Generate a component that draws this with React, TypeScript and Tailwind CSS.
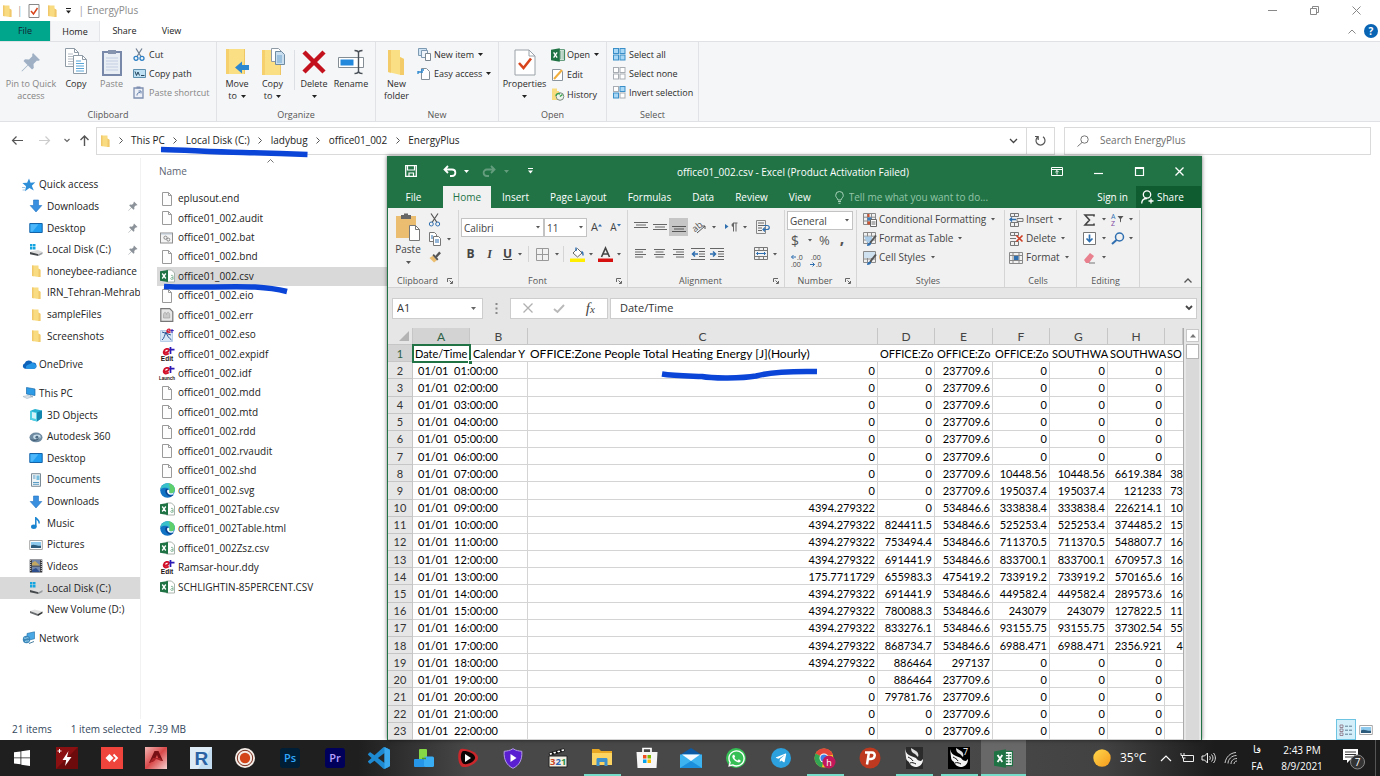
import React from "react";
import { FaWhatsapp, FaTelegramPlane } from "react-icons/fa";

type Kids = { children?: React.ReactNode };

function Ic({ w = 14, h = 14, vb, children, className = "" }: Kids & { w?: number; h?: number; vb?: string; className?: string }) {
  return (
    <svg width={w} height={h} viewBox={vb ?? `0 0 ${w} ${h}`} fill="none" className={`shrink-0 overflow-visible ${className}`} aria-hidden="true">
      {children}
    </svg>
  );
}

/* ---------- shared small glyphs ---------- */
const Caret = ({ className = "" }: { className?: string }) => (
  <Ic w={5} h={3} className={className}><path d="M0 0h5L2.500 3z" fill="currentColor" /></Ic>
);
const Folder = ({ w = 10, h = 12 }: { w?: number; h?: number }) => (
  <Ic w={w} h={h} vb="0 0 10 12">
    <path d="M1 .5h6.500v3L9.300 5v7H7.500L1 11z" fill="#f9dc82" />
    <path d="M1 .5h1.500v10.800L1 11zM7.500 3.500l2 1.200V12H7.500z" fill="#f0c76a" />
  </Ic>
);
const PushPin = ({ s = 10, color = "#8c9299" }: { s?: number; color?: string }) => (
  <Ic w={s} h={s} vb="0 0 20 20">
    <path d="M12 1l7 7-2 1-1-.5-3.500 3.500.3 4-1.800 1.500L7 13.500 1 19.500l-.5-.5 6-6L2.500 9 4 7.200l4 .3L11.500 4 11 3z" fill={color} />
  </Ic>
);
const Doc = () => (
  <Ic w={14} h={14}><path d="M2.500.5h6l3 3v10h-9z" fill="#fdfdfd" stroke="#9a9a9a" /><path d="M8.500.5v3h3" stroke="#9a9a9a" /></Ic>
);
const ExcelDoc = () => (
  <Ic w={15} h={14}>
    <path d="M6.500 1h5l3 3v9h-8z" fill="#fff" stroke="#a9b3ad" />
    <path d="M11 6.500c2-.8 2 .5 2 1.500v2.500m0-2c-2.600-.4-3 2-1.300 2 .8 0 1.300-.5 1.300-1" stroke="#7fb394" strokeWidth=".9" />
    <path d="M0 2.200L8 1v12l-8-1.200z" fill="#1f7244" />
    <path d="M2.200 4.500l3.600 5M5.800 4.500l-3.600 5" stroke="#fff" strokeWidth="1.300" />
  </Ic>
);
const ExcelBig = ({ s = 15 }: { s?: number }) => (
  <Ic w={s} h={s} vb="0 0 16 16">
    <path d="M9 2h6.500v12H9z" fill="#fff" stroke="#1f7244" />
    <path d="M10 4.500h2m1 0h1.500m-4.500 2.300h2m1 0h1.500m-4.500 2.300h2m1 0h1.500m-4.500 2.300h2m1 0h1.500" stroke="#1f7244" strokeWidth="1.200" />
    <path d="M0 2L10 .3v15.400L0 14z" fill="#1f7244" />
    <path d="M3 5l4 6M7 5l-4 6" stroke="#fff" strokeWidth="1.500" />
  </Ic>
);
const EPlus = ({ label }: { label: string }) => (
  <Ic w={15} h={15}>
    <path d="M10.500 0v7M8.500 2.600h6" stroke="#2b1ab5" strokeWidth="1.700" />
    <path d="M4 5.500c3 .2 5-1 4.700-2.500C8.400 1 4.500 1.600 3.800 4.800c-.5 2.600 2 3.500 5 1.700" stroke="#d3122b" strokeWidth="1.900" />
    <text x="7" y="14" fontSize={label === "Edit" ? 6.500 : 4.500} fontWeight="700" fill="#1b1010" textAnchor="middle" fontFamily="Liberation Sans">{label}</text>
  </Ic>
);
const Eso = () => (
  <Ic w={14} h={14}>
    <path d="M.5 2.500h9l3 2v9H.5z" fill="#d7e6f7" stroke="#a8c4e2" strokeWidth=".8" />
    <path d="M2 12c2-1 3-6 4-8 1 4 3 6 5.500 8M2 4l9 3" stroke="#2c5796" />
    <path d="M7 3.600c3-.2 3.500-1.200 3-2C9.200.3 6.800 1.600 6.900 3.500c.1 1.500 2 1.600 3.600.6" stroke="#d3122b" strokeWidth="1.200" />
    <path d="M12 1v4M10.600 2.600h3.200" stroke="#2b1ab5" />
  </Ic>
);
const Bat = () => (
  <Ic w={14} h={14}><rect x=".5" y="2" width="12" height="10" fill="#f4f4f4" stroke="#8e8e8e" /><path d="M1 3h11" stroke="#b9c7d6" /><circle cx="5.500" cy="6.700" r="1.600" stroke="#888" /><circle cx="8.300" cy="8.600" r="1.500" stroke="#888" /></Ic>
);
const Err = () => (
  <Ic w={14} h={14}><path d="M.8.7h9l3 3v9.600H.8z" fill="#e7e7e7" stroke="#777" strokeWidth="1.200" /><path d="M3.500 10V6.500c.6-3 2.600-3 3 0 .5-3 2.700-3 3.200 0V10z" fill="#c9c9c9" stroke="#a5a5a5" strokeWidth=".7" /></Ic>
);
const Edge = () => (
  <Ic w={15} h={15} vb="0 0 16 16">
    <circle cx="8" cy="8" r="7.800" fill="#1173c4" />
    <path d="M.4 7C1 2.700 4.300.2 8 .2c4.700 0 7.800 3.500 7.800 6.800 0 3-2.200 4-4 4-1.600 0-2.400-.7-2.200-1.300.8-1.300.6-4.200-2.800-4.600C4 4.800 1.500 5.500.4 7z" fill="#39c1c9" />
    <path d="M9 .3c4 .4 6.800 3.500 6.800 6.700 0 3-2.200 4-4 4-1.600 0-2.400-.7-2.200-1.300.6-1 2-5-.6-9.400z" fill="#5fcf6b" />
    <path d="M5.800 7.500c-.8 3.500 2 6.500 5.400 6.800 1.400 0 2.600-.6 3.400-1.500-1.800 1-6 .8-7.200-3-.4-1.500.4-2.500 1.200-2.800-1-.9-2.500-.6-2.800.5z" fill="#0b3f8d" />
    <path d="M7.500 8.500c.2-.9 1-1.500 1.700-1.400.8.500.9 1.700.4 2.600-.3.700 1 1.700 3.500 1.200l1.500-.7-.6 1.800c-3 1.400-6.500-.4-6.500-3.500z" fill="#fff" />
  </Ic>
);

/* ---------- navigation pane icons ---------- */
const Star = () => (
  <Ic w={14} h={14}><path d="M7 .5l1.600 4.300 4.700-.6-3.500 3.500 2 4.800L7.400 10 3 13.200l1-5L.4 5l4.700-.2z" fill="#2e8fd8" /><path d="M0 9.500h3M.5 12h2.500" stroke="#9fc5e5" /></Ic>
);
const Down = () => <Ic w={14} h={14}><path d="M4.500 1h5v5.500h3.300L7 13 1.200 6.500h3.300z" fill="#3a8fde" stroke="#2274c4" strokeWidth=".6" /></Ic>;
const Desk = () => <Ic w={14} h={14}><path d="M.8 2.500h12.400v9H.8z" fill="#1e9df1" stroke="#1463a8" /><path d="M1.500 3.200h8l-6 7.500h-2z" fill="#4db7fa" /></Ic>;
const DiskC = () => (
  <Ic w={14} h={14}><path d="M1 1h2.500v2.500H1zM4 1h2.500v2.500H4zM1 4h2.500v2.500H1zM4 4h2.500v2.500H4z" fill="#14a5e0" /><path d="M1.500 8.500L9 7l4.500 2-4 2.500-8-1z" fill="#dcdcdc" /><path d="M1 9l8.500 2.200V13L1 11.300z" fill="#44484a" /><path d="M9.500 11.200L13.500 9v2L9.500 13z" fill="#9a9d9f" /></Ic>
);
const DiskD = () => <Ic w={14} h={14}><path d="M1 8L5.500 6.500 13.500 8.500l-4.500 2.500z" fill="#e3e3e3" /><path d="M1 8l8 3v2l-8-3z" fill="#6a6d6f" /><path d="M9 11l4.500-2.500v1.800L9 13z" fill="#333637" /></Ic>;
const OneD = () => <Ic w={15} h={11} vb="0 0 16 12"><path d="M3 10.500a3 3 0 01-.4-5.700A5 5 0 0111.500 4a3.300 3.300 0 011.500 6.500z" fill="#0f62ba" /><path d="M5 10.500c-2-1.500 0-4 1.500-4.200L10 4.500c2-.8 5.500 1 5.500 3.500 0 1.500-1.200 2.500-2.500 2.500z" fill="#2795e5" /></Ic>;
const PC = () => <Ic w={15} h={14}><path d="M4.500 1.500l8.500 1.500v6.500L4.500 8z" fill="#2e9be6" stroke="#1a6cab" strokeWidth=".7" /><path d="M1 10.500l5-1 4.500 1.200-5.500 1.800z" fill="#dde5eb" stroke="#a4b4c0" strokeWidth=".6" /><path d="M8 9.500l3 1.500" stroke="#8fa6b8" /></Ic>;
const Cube = () => <Ic w={14} h={14}><path d="M1 3l5-2 7 1.500V10l-5 3.500-7-2z" fill="#27b1d2" /><path d="M1 3l7 1.500v9L1 11.500z" fill="#53cfe3" /><path d="M8 4.500l5-2V10l-5 3.500z" fill="#1586ad" /><path d="M3 4l4 1v6L3 10z" fill="#d4f3f8" /></Ic>;
const Auto = () => <Ic w={14} h={14} vb="0 0 15 14"><ellipse cx="7.500" cy="7.500" rx="7" ry="5.200" fill="#6f8ba2" /><ellipse cx="8.500" cy="7" rx="4" ry="2.600" fill="#c6dbe9" /><path d="M1 9c3 2 8 1 11-2-1 4-8 6-11 2z" fill="#3f5c74" /><circle cx="8.500" cy="7.300" r="1.600" fill="#4b6a83" /></Ic>;
const Docs = () => <Ic w={14} h={14}><path d="M2.500.7h9v12.600h-9z" fill="#eef3f6" stroke="#7c8b95" /><path d="M4 3h2.500M4 5h2.500M4 9.500h6M4 11.300h6" stroke="#5b9cc4" /><path d="M7.500 2.500h3V7h-3z" fill="#77bede" /></Ic>;
const Music = () => <Ic w={14} h={14}><ellipse cx="4.800" cy="10.800" rx="2.800" ry="2.200" fill="#1a83d0" /><path d="M6.800 11V1c.4 2.500 4 2.800 3.400 6.500" stroke="#1a83d0" strokeWidth="1.500" /></Ic>;
const Pics = () => <Ic w={14} h={14}><path d="M.7 2.500h12.600v9H.7z" fill="#fff" stroke="#a6a6a6" /><path d="M2 4h10v6H2z" fill="#8cc9ec" /><path d="M2 7.500c3-2 5 .5 10 .3V10H2z" fill="#2d5b7c" /></Ic>;
const Vids = () => <Ic w={14} h={14}><path d="M.7.500h12.600v13H.7z" fill="#35373c" /><path d="M3 1h8v5.500H3zM3 7.500h8V13H3z" fill="#7286ab" /><path d="M3 4l3-2 5 4.500H3z" fill="#c4a862" /><path d="M3 11l4-2 4 4H3z" fill="#2d4e8c" /><path d="M1.700 1v12M12.300 1v12" stroke="#dcdcdc" strokeDasharray="1 1" /></Ic>;
const Net = () => <Ic w={15} h={14}><path d="M5 2.500L12.500.8v7L5 9.500z" fill="#4aa8e4" stroke="#1c6ca4" strokeWidth=".6" /><circle cx="4.500" cy="8.500" r="3.700" fill="#3b86b8" /><path d="M2 7c2 1 3-1 4.500 0M3 10.500c1.500-1 3 0 4-1" stroke="#a5dbf5" /><path d="M7 12.500l5-2" stroke="#4b7fa1" /></Ic>;

type NavItem = { t: string; icon: React.ReactNode; top?: boolean; pin?: boolean; sel?: boolean };
const nav: (NavItem | null)[] = [
  { t: "Quick access", icon: <Star />, top: true },
  { t: "Downloads", icon: <Down />, pin: true },
  { t: "Desktop", icon: <Desk />, pin: true },
  { t: "Local Disk (C:)", icon: <DiskC />, pin: true },
  { t: "honeybee-radiance", icon: <Folder /> },
  { t: "IRN_Tehran-Mehrab", icon: <Folder /> },
  { t: "sampleFiles", icon: <Folder /> },
  { t: "Screenshots", icon: <Folder /> },
  null,
  { t: "OneDrive", icon: <OneD />, top: true },
  null,
  { t: "This PC", icon: <PC />, top: true },
  { t: "3D Objects", icon: <Cube /> },
  { t: "Autodesk 360", icon: <Auto /> },
  { t: "Desktop", icon: <Desk /> },
  { t: "Documents", icon: <Docs /> },
  { t: "Downloads", icon: <Down /> },
  { t: "Music", icon: <Music /> },
  { t: "Pictures", icon: <Pics /> },
  { t: "Videos", icon: <Vids /> },
  { t: "Local Disk (C:)", icon: <DiskC />, sel: true },
  { t: "New Volume (D:)", icon: <DiskD /> },
  null,
  { t: "Network", icon: <Net />, top: true },
];

const files: [string, React.ReactNode][] = [
  ["eplusout.end", <Doc />],
  ["office01_002.audit", <Doc />],
  ["office01_002.bat", <Bat />],
  ["office01_002.bnd", <Doc />],
  ["office01_002.csv", <ExcelDoc />],
  ["office01_002.eio", <Doc />],
  ["office01_002.err", <Err />],
  ["office01_002.eso", <Eso />],
  ["office01_002.expidf", <EPlus label="Edit" />],
  ["office01_002.idf", <EPlus label="Launch" />],
  ["office01_002.mdd", <Doc />],
  ["office01_002.mtd", <Doc />],
  ["office01_002.rdd", <Doc />],
  ["office01_002.rvaudit", <Doc />],
  ["office01_002.shd", <Doc />],
  ["office01_002.svg", <Edge />],
  ["office01_002Table.csv", <ExcelDoc />],
  ["office01_002Table.html", <Edge />],
  ["office01_002Zsz.csv", <ExcelDoc />],
  ["Ramsar-hour.ddy", <EPlus label="Edit" />],
  ["SCHLIGHTIN-85PERCENT.CSV", <ExcelDoc />],
];

/* ---------- explorer ribbon ---------- */
function Group({ label, w, children }: Kids & { label: string; w: string }) {
  return (
    <section className={`flex h-full shrink-0 flex-col border-r border-[#e0e2e5] ${w}`}>
      <div className="flex flex-1">{children}</div>
      <div className="text-center leading-[12px] text-[#555]">{label}</div>
    </section>
  );
}
function Big({ icon, l1, l2, caret, w, dim }: { icon: React.ReactNode; l1: string; l2?: string; caret?: boolean; w: string; dim?: boolean }) {
  return (
    <button className={`flex shrink-0 flex-col items-center pt-[4px] leading-[12px] whitespace-nowrap ${w} ${dim ? "text-[#858585]" : "text-[#2b2b2b]"}`}>
      <span className="flex h-[32px] items-center">{icon}</span>
      <span>{l1}</span>
      {(l2 || caret) && (
        <span className="flex h-[12px] items-center gap-[4px]">
          {l2}
          {caret && <Caret className="text-[#222]" />}
        </span>
      )}
    </button>
  );
}
function Small({ icon, t, caret, dim }: { icon: React.ReactNode; t: string; caret?: boolean; dim?: boolean }) {
  return (
    <button className={`flex h-[19px] items-center whitespace-nowrap ${dim ? "text-[#858585]" : "text-[#2b2b2b]"}`}>
      <span className="flex w-[16px] items-center">{icon}</span>
      {t}
      {caret && <Caret className="ml-[4px] text-[#222]" />}
    </button>
  );
}
const Page = ({ x, y, c }: { x: number; y: number; c: string }) => (
  <g transform={`translate(${x} ${y})`}>
    <path d="M.5.5h9l4 4v14H.5z" fill="#fff" stroke="#8e9aa5" />
    <path d="M9.500.500v4h4" stroke="#8e9aa5" />
    <path d="M3 6h5M3 8.500h8M3 11h8M3 13.500h8M3 16h8" stroke={c} />
  </g>
);
const BigFolder = () => (
  <><path d="M1 1h19v25H1z" fill="#fbdf84" /><path d="M1 1h3v25H1z" fill="#f6d06c" /><path d="M19.500 1v25" stroke="#eec663" /></>
);
const tile = (x: number, y: number, on: boolean) => (
  <rect key={`${x}-${y}`} x={x} y={y} width="5" height="5" fill={on ? "#a8d8f5" : "#fff"} stroke={on ? "#3a8fc9" : "#a8adb3"} />
);
const Tiles = ({ on }: { on: number[] }) => (
  <Ic w={13} h={13}>{[[0.5, 0.5], [7, 0.5], [0.5, 7], [7, 7]].map(([x, y], i) => tile(x, y, on.includes(i)))}</Ic>
);

function ExplorerRibbon() {
  return (
    <div className="flex h-[81px] shrink-0 border-y border-[#dfe1e4] bg-[#f5f6f7] text-[9px]">
      <Group label="Clipboard" w="w-[217px]">
        <Big w="w-[62px]" dim l1="Pin to Quick" l2="access" icon={<PushPin s={20} color="#9fb0c5" />} />
        <Big w="w-[28px]" l1="Copy" icon={<Ic w={24} h={28}><Page x={1} y={0} c="#b5bcc4" /><Page x={9} y={7} c="#5aa5d8" /></Ic>} />
        <Big
          w="w-[43px]" dim l1="Paste"
          icon={<Ic w={20} h={27}><path d="M1 3h18v23H1z" fill="#e9edf4" stroke="#7888a8" strokeWidth="2" /><path d="M6 1h8v4H6z" fill="#8694ad" /><path d="M4 9h12M4 12h12M4 15h12M4 18h12M4 21h12" stroke="#c3cfe2" /></Ic>}
        />
        <div className="flex flex-col pt-[3px]">
          <Small t="Cut" icon={<Ic w={12} h={13}><path d="M3 .5l5 8M9 .5l-5 8" stroke="#6e7f92" strokeWidth="1.200" /><circle cx="3" cy="10.300" r="2" stroke="#2b7fc4" strokeWidth="1.300" /><circle cx="9" cy="10.300" r="2" stroke="#2b7fc4" strokeWidth="1.300" /></Ic>} />
          <Small t="Copy path" icon={<Ic w={14} h={9}><path d="M.5.5h12v8H.5z" fill="#bfe1f4" stroke="#5d8fae" /><path d="M2 2.500l1.500 4L5 3l1.500 3.500M8 6.500h3.500" stroke="#26475e" /></Ic>} />
          <Small dim t="Paste shortcut" icon={<Ic w={12} h={13}><path d="M1 2h9v10H1z" fill="#edf1f7" stroke="#7d8fb0" strokeWidth="1.300" /><path d="M3.500.5h4v2h-4z" fill="#7d8fb0" /><path d="M4 9.500c0-2 1-3 3-3M5.500 5H8v2.500" stroke="#5f7ba8" /></Ic>} />
        </div>
      </Group>
      <Group label="Organize" w="w-[159px]">
        <Big w="w-[40px]" l1="Move" l2="to" caret icon={<Ic w={24} h={28}><BigFolder /><path d="M10 19.500l7-6v3.500h7v5h-7v3.500z" fill="#2b87cf" /></Ic>} />
        <Big w="w-[31px]" l1="Copy" l2="to" caret icon={<Ic w={24} h={29}><g transform="translate(0 1)"><BigFolder /></g><path d="M10.500.5h7l3 3v10h-10z" fill="#fff" stroke="#8e9aa5" /><path d="M14.500 3.500h6l3 3v10h-9z" fill="#c9dff0" stroke="#6f8ba2" /><path d="M16 8h5M16 10h5M16 12h5M16 14h5" stroke="#6da3cc" /></Ic>} />
        <span className="mt-[8px] ml-[6px] h-[40px] w-px bg-[#dcdfe3]" />
        <Big w="w-[38px]" l1="Delete" caret icon={<Ic w={24} h={24}><path d="M2 2l20 20M22 2L2 22" stroke="#c3111d" strokeWidth="4.500" /></Ic>} />
        <Big w="w-[36px]" l1="Rename" icon={<Ic w={26} h={26}><path d="M.5 8.500h25v10H.5z" fill="#fff" stroke="#848c94" /><path d="M2.500 10.500h13v6h-13z" fill="#2188dc" /><path d="M16.500 1.500c2 0 4 .5 4 2.500v18c0 2-2 2.500-4 2.500M24.500 1.500c-2 0-4 .5-4 2.500v18c0 2 2 2.500 4 2.500" stroke="#4a5057" strokeWidth="1.400" /></Ic>} />
      </Group>
      <Group label="New" w="w-[123px]">
        <Big w="w-[41px]" l1="New" l2="folder" icon={<Ic w={19} h={26} vb="0 0 19 26"><path d="M1 1h12v7l4 2v16h-3L1 23z" fill="#fbdf84" /><path d="M1 1h3v22.700L1 23zM13 8l4 2v16h-4z" fill="#f3cc69" /></Ic>} />
        <div className="flex flex-col pt-[3px] pl-px">
          <Small t="New item" caret icon={<Ic w={14} h={13}><path d="M.5.5h8v7h-8z" fill="#cfe5f5" stroke="#7d9ab2" /><path d="M3.500 2.500h6v7h-6z" fill="#eef4f9" stroke="#7d9ab2" /><path d="M7.500 5.500h5v7h-5z" fill="#fff" stroke="#7b8790" /></Ic>} />
          <Small t="Easy access" caret icon={<Ic w={13} h={13}><path d="M3.500 1.500h5l3 3v8h-8z" fill="#fff" stroke="#838f99" /><path d="M0 5h5M3 3h3M0 7V4" stroke="#2b87cf" strokeWidth="1.300" /></Ic>} />
        </div>
      </Group>
      <Group label="Open" w="w-[108px]">
        <Big w="w-[51px]" l1="Properties" caret icon={<Ic w={22} h={27}><path d="M1 1h14l6 6v19H1z" fill="#fff" stroke="#9aa1a8" /><path d="M15 1v6h6" stroke="#9aa1a8" /><path d="M5 14l4.500 5L17 9.500" stroke="#d8451c" strokeWidth="2.600" /></Ic>} />
        <div className="flex flex-col gap-[1px] pt-[3px] pl-[1px]">
          <Small t="Open" caret icon={<ExcelBig s={14} />} />
          <Small t="Edit" icon={<Ic w={13} h={13}><path d="M1.500 1.500h8l2 2v9h-10z" fill="#fff" stroke="#8a949d" /><path d="M3 11l8-9" stroke="#f0ae3c" strokeWidth="2" /></Ic>} />
          <Small t="History" icon={<Ic w={14} h={13}><path d="M1 .5h5v2.500h2V12H1z" fill="#f9dc7f" /><circle cx="9" cy="8.500" r="3.800" fill="#eef4ec" stroke="#7b8b83" /><path d="M5 8c0-2 2-3 4-2M9 8.500l2.500-2" stroke="#35a04a" strokeWidth="1.400" /></Ic>} />
        </div>
      </Group>
      <Group label="Select" w="w-[92px]">
        <div className="flex flex-col pt-[3px] pl-[6px]">
          <Small t="Select all" icon={<Tiles on={[0, 1, 2, 3]} />} />
          <Small t="Select none" icon={<Tiles on={[]} />} />
          <Small t="Invert selection" icon={<Tiles on={[1, 2]} />} />
        </div>
      </Group>
    </div>
  );
}

const Crumb = () => <span className="flex w-[21px] justify-center"><Ic w={4} h={7}><path d="M.5.5l3 3-3 3" stroke="#555" /></Ic></span>;

/* ---------- Excel ---------- */
const tabs = ["Insert", "Page Layout", "Formulas", "Data", "Review", "View"];

function XGroup({ label, w, launch, children }: Kids & { label: string; w: string; launch?: boolean }) {
  return (
    <section className={`flex h-full shrink-0 flex-col border-r border-[#d5d5d5] ${w}`}>
      <div className="flex flex-1">{children}</div>
      <div className="flex h-[13px] items-center pr-[5px] text-[9px] text-[#555]">
        <span className="flex-1 text-center">{label}</span>
        {launch && <Ic w={6} h={6}><path d="M.5 4V.5H5M2.500 2.500L5 5M5.500 3v2.500H3" stroke="#666" /></Ic>}
      </div>
    </section>
  );
}
const Dd = ({ className = "" }: { className?: string }) => (
  <button aria-label="More options" className={`flex h-[14px] items-center ${className}`}><Ic w={4} h={3}><path d="M0 0h4L2 2.500z" fill="#555" /></Ic></button>
);
const Lines = ({ rows, w = 12 }: { rows: [number, number][]; w?: number }) => (
  <Ic w={w} h={12}>{rows.map(([x, l], i) => <path key={i} d={`M${x} ${1.5 + i * 2.5}h${l}`} stroke="#666" />)}</Ic>
);
function Pick({ label, v, w }: { label: string; v: string; w: string }) {
  return (
    <label className={`relative flex h-[19px] items-center border border-[#c3c3c3] bg-white ${w}`}>
      <select aria-label={label} className="w-full appearance-none bg-transparent pl-[2px] text-[10px] leading-[14px] text-[#444]">
        <option>{v}</option>
      </select>
      <span className="pointer-events-none absolute right-[3px]"><Ic w={4} h={3}><path d="M0 0h4L2 2.500z" fill="#555" /></Ic></span>
    </label>
  );
}
const Tool = ({ label, children, w = "w-[19px]", on }: Kids & { label: string; w?: string; on?: boolean }) => (
  <button aria-label={label} className={`flex h-[18px] shrink-0 items-center justify-center ${w} ${on ? "bg-[#c6c6c6]" : ""}`}>{children}</button>
);
const XRow = ({ icon, t }: { icon: React.ReactNode; t: string }) => (
  <button className="flex h-[19px] items-center gap-[2px] whitespace-nowrap text-[#444]">
    {icon}<span>{t}</span><Ic w={4} h={3} className="ml-[3px]"><path d="M0 0h4L2 2.500z" fill="#555" /></Ic>
  </button>
);
const GridIc = ({ children }: Kids) => (
  <Ic w={14} h={14}><path d="M.5.500h12v11H.5zM.5 4.200h12M.5 8h12M4.500.500v11M8.500.500v11" stroke="#8a8a8a" />{children}</Ic>
);

function ExcelRibbon() {
  return (
    <div className="flex h-[80px] shrink-0 border-b border-[#d2d2d2] bg-[#f1f1f1] pt-[2px]">
      <XGroup label="Clipboard" w="w-[71px]" launch>
        <button className="flex w-[40px] flex-col items-center pt-[3px] text-[#444]">
          <Ic w={26} h={28}><path d="M1 3h20v22H1z" fill="#eabd71" /><path d="M6 2h10v4H6zM9 .5h4V3H9z" fill="#666" /><path d="M14.500 12.500h6l4 4v11h-10z" fill="#fff" stroke="#777" /><path d="M20.500 12.500v4h4" stroke="#777" /></Ic>
          <span className="leading-[16px]">Paste</span>
          <Caret className="mt-[4px] text-[#555]" />
        </button>
        <div className="flex flex-col items-start gap-[5px] pt-[3px]">
          <button aria-label="Cut"><Ic w={14} h={14}><path d="M3 .5l6 9M10 .5l-6 9" stroke="#555" strokeWidth="1.200" /><circle cx="3.300" cy="11" r="2" stroke="#2f6fb0" /><circle cx="9.700" cy="11" r="2" stroke="#2f6fb0" /></Ic></button>
          <span className="flex items-center gap-[5px]">
            <button aria-label="Copy"><Ic w={14} h={14}><path d="M1.500.5h5l2 2v7h-7z" fill="#fff" stroke="#777" /><path d="M5.500 4.500h5l2 2v7h-7z" fill="#fff" stroke="#777" /><path d="M7 8h4M7 10h4M3 4h2M3 6h2" stroke="#2f6fb0" /></Ic></button>
            <Dd />
          </span>
          <button aria-label="Format Painter"><Ic w={14} h={12} vb="0 0 14 13"><path d="M1 7.500l5 5 3-2.500-4-5z" fill="#eabd71" /><path d="M5 4l5 5.500" stroke="#555" strokeWidth="2" /><path d="M8 6.500L12.500 1.500" stroke="#555" strokeWidth="2.500" /></Ic></button>
        </div>
      </XGroup>
      <XGroup label="Font" w="w-[169px]" launch>
        <div className="flex flex-col gap-[8px] pt-[8px] pl-[2px]">
          <div className="flex items-center">
            <Pick label="Font" v="Calibri" w="w-[83px]" />
            <Pick label="Font size" v="11" w="w-[43px]" />
            <Tool label="Increase font size"><span className="text-[11px] text-[#444]">A</span><Ic w={4} h={8}><path d="M0 2.500h4L2 0z" fill="#2f6fb0" /></Ic></Tool>
            <Tool label="Decrease font size"><span className="text-[10px] text-[#444]">A</span><Ic w={4} h={8}><path d="M0 0h4L2 2.500z" fill="#2f6fb0" /></Ic></Tool>
          </div>
          <div className="flex items-center text-[12px] text-[#444]">
            <Tool label="Bold"><b>B</b></Tool>
            <Tool label="Italic"><i className="font-['Liberation_Serif',serif] font-bold">I</i></Tool>
            <Tool label="Underline" w="w-[17px]"><span className="font-bold underline">U</span></Tool>
            <Dd className="ml-[2px]" />
            <span className="mx-[6px] h-[16px] w-px bg-[#d5d5d5]" />
            <Tool label="Borders" w="w-[14px]"><Ic w={13} h={13}><path d="M.5.5h12v12H.5zM6.500.500v12M.5 6.500h12" stroke="#999" /></Ic></Tool>
            <Dd className="ml-[6px]" />
            <span className="mr-[5px] ml-[4px] h-[16px] w-px bg-[#d5d5d5]" />
            <Tool label="Fill colour" w="w-[16px]"><Ic w={15} h={15}><path d="M3 6l4.500-4.500L12 6l-4.500 4z" fill="#fff" stroke="#666" /><path d="M6 4V.500M11.500 4.500c2 1 1.500 3 1.500 4" stroke="#2f6fb0" strokeWidth="1.400" /><path d="M0 11.500h15V15H0z" fill="#ffee00" /></Ic></Tool>
            <Dd className="ml-[4px]" />
            <Tool label="Font colour" w="ml-[5px] w-[15px]"><Ic w={15} h={15}><path d="M3.500 10L7.500 1l4 9M5 7h5" stroke="#444" strokeWidth="1.600" /><path d="M0 11.500h15V15H0z" fill="#d60f0f" /></Ic></Tool>
            <Dd className="ml-[4px]" />
          </div>
        </div>
      </XGroup>
      <XGroup label="Alignment" w="w-[157px]" launch>
        <div className="flex flex-col gap-[9px] pt-[8px] pl-[3px]">
          <div className="flex items-center">
            <Tool label="Top align"><Lines w={14} rows={[[0, 14], [2, 10], [0, 14]]} /></Tool>
            <Tool label="Middle align"><Ic w={14} h={12}><path d="M0 3.500h14M2 6h10M0 8.500h14" stroke="#666" /></Ic></Tool>
            <Tool label="Bottom align" on><Ic w={14} h={12}><path d="M0 5.500h14M2 8h10M0 10.500h14" stroke="#555" /></Ic></Tool>
            <Tool label="Orientation" w="w-[22px]"><Ic w={15} h={14}><text x="0" y="10" fontSize="9" fill="#555" transform="rotate(-40 5 7)">ab</text><path d="M5 13l8-7m0 0v3m0-3h-3" stroke="#555" /></Ic></Tool>
            <Dd className="ml-[2px]" />
            <Tool label="Text direction" w="ml-[8px] w-[15px]"><Ic w={13} h={12}><path d="M0 3v5l3.500-2.500z" fill="#2f6fb0" /><path d="M8 2h4.500M8.500 2v8.500M11 2v8.500" stroke="#666" /><path d="M8.500 2a2 2 0 000 4z" fill="#666" /></Ic></Tool>
            <Dd className="ml-[4px]" />
            <Tool label="Wrap text" w="ml-[8px] w-[16px]"><Ic w={14} h={14}><path d="M.5.5h9v13h-9z" stroke="#888" /><path d="M2 3h6M2 5.500h6M2 8h4M2 10.500h4" stroke="#666" /><path d="M8 5.500h3c3 0 3 4 0 4H7m2-2L7 9.500l2 2" stroke="#2f6fb0" strokeWidth="1.200" /></Ic></Tool>
          </div>
          <div className="flex items-center">
            <Tool label="Align left"><Lines w={11} rows={[[0, 11], [0, 8], [0, 11], [0, 8]]} /></Tool>
            <Tool label="Center"><Lines w={11} rows={[[0, 11], [1.5, 8], [0, 11], [1.5, 8]]} /></Tool>
            <Tool label="Align right"><Lines w={11} rows={[[0, 11], [3, 8], [0, 11], [3, 8]]} /></Tool>
            <Tool label="Decrease indent"><Ic w={14} h={12}><path d="M0 .5h14M8 3.500h6M8 6h6M8 8.500h6M0 11.500h14" stroke="#666" /><path d="M7 6H1.500m2.500-2.500L1.500 6 4 8.500" stroke="#2f6fb0" strokeWidth="1.500" /></Ic></Tool>
            <Tool label="Increase indent"><Ic w={14} h={12}><path d="M0 .5h14M8 3.500h6M8 6h6M8 8.500h6M0 11.500h14" stroke="#666" /><path d="M0 6h5.500M3 3.500L5.500 6 3 8.500" stroke="#2f6fb0" strokeWidth="1.500" /></Ic></Tool>
            <Tool label="Merge and center" w="ml-[27px] w-[16px]"><Ic w={14} h={14}><path d="M.5.5h13v12H.5zM.5 3.500h13M.5 9.500h13M5 .5v3M9.500.5v3M5 9.500v3M9.500 9.500v3" stroke="#777" /><path d="M2.500 6.500h9M4 5L2.500 6.500 4 8m6-3l1.500 1.500L10 8" stroke="#2f6fb0" /></Ic></Tool>
            <Dd className="ml-[4px]" />
          </div>
        </div>
      </XGroup>
      <XGroup label="Number" w="w-[72px]" launch>
        <div className="flex flex-1 flex-col pt-px pl-[2px]">
          <Pick label="Number format" v="General" w="w-[66px]" />
          <div className="flex h-[21px] items-center pl-[4px] text-[#555]">
            <button className="text-[14px]" aria-label="Currency">$</button><Dd className="ml-[9px]" />
            <button className="ml-[7px] text-[13px]" aria-label="Percent">%</button>
            <button className="ml-[10px] pb-[6px] text-[16px] leading-[14px] font-bold" aria-label="Comma style">,</button>
          </div>
          <div className="flex h-[19px] items-center gap-[6px] pl-[4px]">
            <Tool label="Increase decimal" w="w-[13px]"><Ic w={13} h={13}><path d="M5 3H.5M2.500 1L.5 3l2 2" stroke="#2f6fb0" /><text x="6" y="6" fontSize="7" fill="#444">.0</text><text x="0" y="13" fontSize="7" fill="#444">.00</text></Ic></Tool>
            <Tool label="Decrease decimal" w="w-[13px]"><Ic w={13} h={13}><text x="1" y="6" fontSize="7" fill="#444">.00</text><path d="M0 10.500h4.500m-2-2l2 2-2 2" stroke="#2f6fb0" /><text x="6" y="13" fontSize="7" fill="#444">.0</text></Ic></Tool>
          </div>
        </div>
      </XGroup>
      <XGroup label="Styles" w="w-[148px]">
        <div className="flex flex-col pl-[6px]">
          <XRow t="Conditional Formatting" icon={<GridIc><path d="M4.500 1h2v3h-2zM4.500 8.500h3v3h-3z" fill="#d0532f" /><path d="M4.500 4.500h4v3h-4z" fill="#3d7dbd" /><path d="M7.500 6.500h6v7h-6z" fill="#fff" stroke="#666" /><path d="M8.500 9h4m-4 2h4" stroke="#666" /></GridIc>} />
          <XRow t="Format as Table" icon={<GridIc><path d="M1 4.500h8v6H4z" fill="#a9cbe8" /><path d="M13 3.500L7 11" stroke="#555" strokeWidth="2" /><path d="M4 14c0-3 2-3.500 4-3 .5 2-1.500 3-4 3z" fill="#2f6fb0" /></GridIc>} />
          <XRow t="Cell Styles" icon={<GridIc><path d="M1 1h11v6H1z" fill="#cfe0ee" /><path d="M13 3.500L7 11" stroke="#555" strokeWidth="2" /><path d="M4 14c0-3 2-3.500 4-3 .5 2-1.500 3-4 3z" fill="#2f6fb0" /></GridIc>} />
        </div>
      </XGroup>
      <XGroup label="Cells" w="w-[72px]">
        <div className="flex flex-col pl-[4px]">
          <XRow t="Insert" icon={<Ic w={15} h={14}><path d="M1.500.5h8v3h-8zM5.500.5v3M1.500 9.500h8v4h-8zM5.500 9.500v4M8 5.500h6v3H8z" stroke="#777" /><path d="M7 6.500H1m2-2l-2 2 2 2" stroke="#2f6fb0" strokeWidth="1.300" /></Ic>} />
          <XRow t="Delete" icon={<Ic w={15} h={14}><path d="M1.500.5h8v3h-8zM5.500.5v3M1.500 9.500h8v4h-8zM5.500 9.500v4M1 6.500h6" stroke="#777" /><path d="M7.500 3.500l6 6m0-6l-6 6" stroke="#cf3e24" strokeWidth="1.600" /></Ic>} />
          <XRow t="Format" icon={<Ic w={15} h={14}><path d="M.5 1.500h13v11H.500zM.5 4.500h13M.5 9.500h13M4 1.500v11M10 1.500v11" stroke="#888" /><path d="M5 5h4.500v4H5z" fill="#2f6fb0" /></Ic>} />
        </div>
      </XGroup>
      <XGroup label="Editing" w="w-[63px]">
        <div className="grid h-[57px] grid-cols-[28px_27px] items-center pl-[6px]">
          <span className="flex items-center gap-[6px]"><Tool label="AutoSum" w="w-[13px]"><Ic w={11} h={12}><path d="M10 2.500V1H1l4.500 5L1 11h9V9.500" stroke="#444" strokeWidth="1.600" /></Ic></Tool><Dd /></span>
          <span className="flex items-center gap-[4px]"><Tool label="Sort and filter" w="w-[14px]"><Ic w={14} h={13}><text x="0" y="6" fontSize="7" fill="#2f6fb0">A</text><text x="0" y="13" fontSize="7" fill="#8047a0">Z</text><path d="M6.500 3h6L10 6v3.500L9 8.500V6z" fill="#555" /></Ic></Tool><Dd /></span>
          <span className="flex items-center gap-[6px]"><Tool label="Fill" w="w-[13px]"><Ic w={13} h={13}><path d="M.5.5h12v12H.5z" fill="#fff" stroke="#777" /><path d="M6.500 2.500v7m-3-3l3 3 3-3" stroke="#2f6fb0" strokeWidth="1.700" /></Ic></Tool><Dd /></span>
          <span className="flex items-center gap-[4px]"><Tool label="Find" w="w-[14px]"><Ic w={14} h={13}><circle cx="8.500" cy="5" r="4" stroke="#2f6fb0" strokeWidth="1.500" /><path d="M5.500 8L1 12" stroke="#2f6fb0" strokeWidth="2" /></Ic></Tool><Dd /></span>
          <span className="flex items-center gap-[6px]"><Tool label="Clear" w="w-[13px]"><Ic w={13} h={12}><path d="M1 8l6-7 4 3-5 7H3z" fill="#e8808e" /><path d="M6 11h6" stroke="#777" /></Ic></Tool><Dd /></span>
        </div>
      </XGroup>
      <div className="flex flex-1 items-end justify-end pr-[9px] pb-[4px]">
        <button aria-label="Collapse ribbon"><Ic w={8} h={5}><path d="M.5 4.500L4 1l3.500 3.500" stroke="#555" strokeWidth="1.300" /></Ic></button>
      </div>
    </div>
  );
}

const HOUR = "4394.279322";
const W = "237709.6";
const O = "534846.6";
const data: string[][] = [
  ["0", "0", W, "0", "0", "0", ""],
  ["0", "0", W, "0", "0", "0", ""],
  ["0", "0", W, "0", "0", "0", ""],
  ["0", "0", W, "0", "0", "0", ""],
  ["0", "0", W, "0", "0", "0", ""],
  ["0", "0", W, "0", "0", "0", ""],
  ["0", "0", W, "10448.56", "10448.56", "6619.384", "38"],
  ["0", "0", W, "195037.4", "195037.4", "121233", "73"],
  [HOUR, "0", O, "333838.4", "333838.4", "226214.1", "10"],
  [HOUR, "824411.5", O, "525253.4", "525253.4", "374485.2", "15"],
  [HOUR, "753494.4", O, "711370.5", "711370.5", "548807.7", "16"],
  [HOUR, "691441.9", O, "833700.1", "833700.1", "670957.3", "16"],
  ["175.7711729", "655983.3", "475419.2", "733919.2", "733919.2", "570165.6", "16"],
  [HOUR, "691441.9", O, "449582.4", "449582.4", "289573.6", "16"],
  [HOUR, "780088.3", O, "243079", "243079", "127822.5", "11"],
  [HOUR, "833276.1", O, "93155.75", "93155.75", "37302.54", "55"],
  [HOUR, "868734.7", O, "6988.471", "6988.471", "2356.921", "4"],
  [HOUR, "886464", "297137", "0", "0", "0", ""],
  ["0", "886464", W, "0", "0", "0", ""],
  ["0", "79781.76", W, "0", "0", "0", ""],
  ["0", "0", W, "0", "0", "0", ""],
  ["0", "0", W, "0", "0", "0", ""],
];
const heads = ["OFFICE:Zo", "OFFICE:Zo", "OFFICE:Zo", "SOUTHWA", "SOUTHWA", "SO"];

function Sheet() {
  const rowHead = "border-r border-b border-[#c6c6c6] bg-[#e6e6e6] p-0 text-center font-normal text-[#333]";
  return (
    <table className="h-full w-full table-fixed border-separate border-spacing-0 bg-white font-['Lato',sans-serif] text-[11px] leading-[13px] text-black">
      <colgroup>
        <col className="w-[25px]" /><col className="w-[57px]" /><col className="w-[58px]" /><col />
        <col className="w-[57px]" /><col className="w-[58px]" /><col className="w-[57px]" /><col className="w-[58px]" /><col className="w-[57px]" /><col className="w-[18px]" />
      </colgroup>
      <thead>
        <tr className="h-[17px] bg-[#e6e6e6] text-[#444]">
          <th className="border-r border-b border-[#c6c6c6] p-0"><span className="flex justify-end pr-[3px]"><Ic w={10} h={10}><path d="M10 0v10H0z" fill="#b4b4b4" /></Ic></span></th>
          <th className="border-r border-b border-r-[#c6c6c6] border-b-[#217346] bg-[#d3d3d3] p-0 text-[12px] font-normal text-[#2c6145]">A</th>
          {["B", "C", "D", "E", "F", "G", "H", ""].map((c, i) => (
            <th key={i} className="border-r border-b border-[#c6c6c6] p-0 text-[12px] font-normal">{c}</th>
          ))}
        </tr>
      </thead>
      <tbody>
        <tr>
          <th className="border-r border-b border-b-[#c6c6c6] border-r-[#217346] bg-[#d3d3d3] p-0 text-center font-normal text-[#2c6145]">1</th>
          <td className="relative p-0 pl-[2px] whitespace-nowrap outline-2 -outline-offset-1 outline-[#217346]">
            Date/Time
            <span className="absolute -right-[2px] -bottom-[2px] z-10 size-[4px] border-t border-l border-white bg-[#217346]" />
          </td>
          <td className="border-b border-[#d4d4d4] p-0 pl-[3px] whitespace-nowrap">Calendar Y</td>
          <td className="border-b border-[#d4d4d4] p-0 pl-[2px] text-[12px] whitespace-nowrap">OFFICE:Zone People Total Heating Energy [J](Hourly)</td>
          {heads.map((h, i) => (
            <td key={i} className="border-b border-[#d4d4d4] p-0 pl-[2px] whitespace-nowrap">{h}</td>
          ))}
        </tr>
        {data.map((r, i) => (
          <tr key={i}>
            <th className={rowHead}>{i + 2}</th>
            <td colSpan={2} className="border-r border-b border-[#d4d4d4] p-0 pl-[5px] whitespace-pre">{`01/01  ${String(i + 1).padStart(2, "0")}:00:00`}</td>
            {r.map((v, j) => (
              <td key={j} className={`border-b border-[#d4d4d4] p-0 text-right ${j < 6 ? "border-r pr-[2px]" : ""}`}>{v}</td>
            ))}
          </tr>
        ))}
      </tbody>
    </table>
  );
}

function Excel() {
  return (
    <section className="absolute top-[156px] right-[178px] bottom-0 left-[387px] flex flex-col overflow-hidden border-x border-[#217346] bg-[#e6e6e6] text-[10px] shadow-[0_0_4px_rgba(0,0,0,0.55)]">
      <header className="flex h-[30px] shrink-0 items-center bg-[#217346] text-white">
        <div className="flex w-[150px] shrink-0 items-center pl-[17px]">
          <button aria-label="Save"><Ic w={12} h={12}><path d="M.7.7h10.600v10.600H.7z" stroke="#fff" strokeWidth="1.300" /><path d="M2.500 1v4h7V1M4 11V8h4.500v3" stroke="#fff" strokeWidth="1.200" /></Ic></button>
          <button aria-label="Undo" className="ml-[26px]"><Ic w={14} h={12}><path d="M5 1L1.500 4.500 5 8M2 4.500h7c4.500 0 4.500 6.500 0 6.500H7" stroke="#fff" strokeWidth="1.800" /></Ic></button>
          <Caret className="ml-[7px]" />
          <button aria-label="Redo" className="ml-[13px] opacity-30"><Ic w={14} h={12}><path d="M9 1l3.500 3.500L9 8m3-3.500H5c-4.500 0-4.500 6.500 0 6.500h2" stroke="#fff" strokeWidth="1.800" /></Ic></button>
          <Caret className="ml-[8px] opacity-30" />
          <Ic w={5} h={6} className="ml-[19px]"><path d="M0 .5h5" stroke="#fff" /><path d="M0 2.500h5L2.500 5.500z" fill="#fff" /></Ic>
        </div>
        <h1 className="flex-1 pr-[3px] pt-[3px] text-center whitespace-nowrap">office01_002.csv - Excel (Product Activation Failed)</h1>
        <div className="flex w-[150px] shrink-0 items-center justify-between pr-[17px]">
          <button aria-label="Ribbon display options"><Ic w={12} h={9}><path d="M.5.5h11v8H.5zM.5 2.500h11M6 7.500v-4M4.300 5.200L6 3.500l1.700 1.700" stroke="#fff" /></Ic></button>
          <button aria-label="Minimize"><Ic w={9} h={9}><path d="M0 6.500h9" stroke="#fff" strokeWidth="1.200" /></Ic></button>
          <button aria-label="Restore"><Ic w={9} h={9}><path d="M.5.500h8v8h-8zM.5 1.500h8" stroke="#fff" strokeWidth="1.200" /></Ic></button>
          <button aria-label="Close"><Ic w={9} h={9}><path d="M.5.5l8 8m0-8l-8 8" stroke="#fff" strokeWidth="1.300" /></Ic></button>
        </div>
      </header>
      <nav className="flex h-[22px] shrink-0 items-center bg-[#217346] text-white">
        <button className="w-[55px] pr-[4px]">File</button>
        <button className="h-full w-[48px] bg-[#f1f1f1] text-[#217346]">Home</button>
        <div className="flex gap-[21px] pl-[11px] whitespace-nowrap">
          {tabs.map((t) => <button key={t}>{t}</button>)}
        </div>
        <label className="flex flex-1 items-center gap-[5px] pl-[24px]">
          <Ic w={9} h={13}><path d="M3 9C2.500 7 .7 6.500.7 4.300a3.800 3.800 0 017.600 0C8.300 6.500 6.500 7 6 9zM3 10.500h3M3.500 12.300h2" stroke="#a9d2b9" /></Ic>
          <input aria-label="Tell me" placeholder="Tell me what you want to do..." className="w-[160px] bg-transparent placeholder:text-[#93c5a7]" />
        </label>
        <button className="pr-[8px]">Sign in</button>
        <button className="flex h-full w-[65px] items-center gap-[3px] bg-[#0e5c2f] pl-[5px]">
          <Ic w={13} h={14}><circle cx="6" cy="4.500" r="3.700" stroke="#fff" strokeWidth="1.300" /><path d="M.7 13.500c0-3 2-5 5.300-5M10 8.500v5M7.500 11h5" stroke="#fff" strokeWidth="1.300" /></Ic>
          Share
        </button>
      </nav>
      <ExcelRibbon />
      <div className="flex h-[40px] shrink-0 items-center px-[4px] text-[11px] text-[#444]">
        <label className="flex h-[21px] w-[91px] items-center border border-[#cdcdcd] bg-white pr-[6px] pl-[4px]">
          <input aria-label="Name box" defaultValue="A1" className="w-full min-w-0 bg-transparent text-[#333]" /><Caret className="text-[#666]" />
        </label>
        <Ic w={3} h={11} className="mx-[12px]"><path d="M1.500 0v2M1.500 4.500v2M1.500 9v2" stroke="#888" strokeWidth="2" /></Ic>
        <div className="mr-[2px] flex h-[21px] w-[98px] items-center justify-around border border-[#cdcdcd] bg-white px-[2px]">
          <button aria-label="Cancel"><Ic w={10} h={10}><path d="M.5.5l9 9m0-9l-9 9" stroke="#b0b0b0" strokeWidth="1.300" /></Ic></button>
          <button aria-label="Enter"><Ic w={12} h={9}><path d="M1 5l3.500 3L11 1" stroke="#b9b9b9" strokeWidth="1.900" /></Ic></button>
          <button className="font-['Liberation_Serif',serif] text-[15px] leading-[16px] text-[#444] italic" aria-label="Insert function">f<span className="text-[11px]">x</span></button>
        </div>
        <label className="flex h-[21px] flex-1 items-center border border-[#cdcdcd] bg-white pr-[3px] pl-[9px]">
          <input aria-label="Formula bar" defaultValue="Date/Time" className="w-full bg-transparent text-[#333]" />
          <Ic w={8} h={6}><path d="M1 1l3 3 3-3" stroke="#444" strokeWidth="1.800" /></Ic>
        </label>
      </div>
      <div className="flex min-h-0 flex-1">
        <div className="min-w-0 flex-1 border-r border-[#ababab]"><Sheet /></div>
        <div className="flex w-[17px] shrink-0 flex-col items-center gap-[2px] bg-[#e6e6e6] pt-px">
          <button aria-label="Scroll up" className="flex h-[13px] w-[13px] shrink-0 items-center justify-center border border-[#c8c8c8] bg-white"><Ic w={6} h={4}><path d="M0 3.500h6L3 0z" fill="#777" /></Ic></button>
          <div className="w-[13px] flex-1 bg-[#d9d9d9]"><div className="h-[15px] border border-[#b5b5b5] bg-white" /></div>
        </div>
      </div>
    </section>
  );
}

/* ---------- taskbar ---------- */
const Rhino = ({ n }: { n?: boolean }) => (
  <Ic w={22} h={22}>
    <rect x={n ? 0 : 3} width={n ? 22 : 17} height="22" fill={n ? "#000" : "#2b2b2b"} />
    <path d="M2 2c1 4 3 6 6 7l5 2c1 2 3 3 5 3l2-2c0 4-2 7-6 8-4 0-7-2-8-5-2-1-3-3-3-5z" fill="#f4f4f4" />
    <path d="M8 1c0 3 1 5 4 6l3 3c1-2 0-5-2-6z" fill="#dedede" />
    <path d="M5 10c2 1 4 2 5 4M7 16c2-1 4 0 6 1" stroke="#111" />
    {n && <text x="15" y="8" fontSize="9" fill="#fff">7</text>}
  </Ic>
);
type App = { n: string; icon: React.ReactNode; run?: boolean; on?: boolean };
const apps: App[] = [
  { n: "Start", icon: <Ic w={16} h={16}><path d="M0 2.300L6.500 1.400v6H0zM7.300 1.300L16 0v7.400H7.300zM0 8.300h6.500v6L0 13.400zM7.300 8.300H16V16l-8.700-1.300z" fill="#fff" /></Ic> },
  { n: "Flash", icon: <Ic w={22} h={22}><rect width="22" height="22" fill="#6d0a0c" /><path d="M0 0h22L0 22z" fill="#8a1012" /><path d="M12.500 4L6.500 13h3.700L9 19l6.500-9H11z" fill="#fff" /><path d="M3.500 2v4M1.500 4h4" stroke="#fff" /></Ic> },
  { n: "AnyDesk", icon: <Ic w={22} h={22}><rect width="22" height="22" fill="#ef443b" /><path d="M8.500 7l4 4-4 4-4-4z" fill="#fff" /><path d="M12.500 7.500l3.500 3.500-3.500 3.500" stroke="#fff" strokeWidth="1.800" /></Ic> },
  { n: "AutoCAD", icon: <Ic w={22} h={22}><defs><linearGradient id="ac" x1="0" y1="0" x2="1" y2="1"><stop stopColor="#f3b7b4" /><stop offset=".5" stopColor="#d9494a" /><stop offset="1" stopColor="#f7d4d2" /></linearGradient></defs><rect width="22" height="22" fill="url(#ac)" /><path d="M4 16l5.500-12h4L18 14l-4-1-2-5-3 6z" fill="#771115" /><path d="M4 16l5-2 2-2 3 1 4 1-3-3H8z" fill="#a92226" /></Ic> },
  { n: "Revit", icon: <Ic w={22} h={22}><rect width="22" height="22" fill="#dcebf6" /><path d="M22 0v22H8z" fill="#c3dcef" /><text x="4.500" y="18" fontSize="19" fontWeight="700" fill="#2a62a4" fontFamily="Liberation Sans">R</text></Ic> },
  { n: "Recorder", icon: <Ic w={20} h={20}><circle cx="10" cy="10" r="10" fill="#f4ece6" /><circle cx="10" cy="10" r="7.700" stroke="#7b2c1b" /><circle cx="10" cy="10" r="5.200" fill="#d34418" /></Ic> },
  { n: "Photoshop", icon: <Ic w={20} h={20}><rect width="20" height="20" rx="3" fill="#001e36" /><text x="10" y="14" fontSize="11" fontWeight="600" fill="#31a8ff" textAnchor="middle">Ps</text></Ic> },
  { n: "Premiere", icon: <Ic w={20} h={20}><rect width="20" height="20" rx="3" fill="#00005b" /><text x="10" y="14" fontSize="11" fontWeight="600" fill="#b9a0ff" textAnchor="middle">Pr</text></Ic> },
  { n: "VS Code", icon: <Ic w={22} h={22} vb="0 0 24 24"><path d="M23.150 2.587L18.210.21a1.494 1.494 0 0 0-1.705.29l-9.460 8.630-4.120-3.128a.999.999 0 0 0-1.276.057L.327 7.261A1 1 0 0 0 .326 8.740L3.899 12 .326 15.260a1 1 0 0 0 .001 1.479L1.650 17.940a.999.999 0 0 0 1.276.057l4.120-3.128 9.460 8.630a1.492 1.492 0 0 0 1.704.29l4.942-2.377A1.500 1.500 0 0 0 24 20.060V3.939a1.500 1.500 0 0 0-.85-1.352zm-5.146 14.861L10.826 12l7.178-5.448v10.896z" fill="#1e8ad2" /><path d="M18 0l5.500 2.600.5 1.300V20l-.8 1.400L18 24z" fill="#3ba9ee" /></Ic> },
  { n: "Deploy", icon: <Ic w={20} h={18}><rect x="5" y="0" width="8" height="12" rx="1" fill="#86d946" /><rect x="0" y="10" width="11" height="8" rx="1" fill="#2697e8" /><rect x="10" y="7.500" width="10" height="10.500" rx="1.500" fill="#3aaef5" /><path d="M8 9.500h4" stroke="#4d9b22" strokeWidth="1.500" /></Ic> },
  { n: "Player", icon: <Ic w={22} h={20}><path d="M4 1c5-1 16 3 17 8s-9 11-15 10S0 2 4 1z" fill="#c9272b" /><path d="M6 3c4-.5 11 2 12 6s-7 8-11 7S3 4 6 3z" fill="#0d0505" /><path d="M8 6v8l6-4z" fill="#fff" /></Ic> },
  { n: "Shield player", icon: <Ic w={20} h={21}><path d="M10 .7c3 2 6 2.300 8.800 2.600C19.500 12 16 17.500 10 20.300 4 17.500.5 12 1.200 3.300 4 3 7 2.700 10 .7z" fill="#5a1fd0" stroke="#b49be8" /><path d="M7.500 6v8l6-4z" fill="#fff" /></Ic> },
  { n: "Media 321", icon: <Ic w={22} h={22}><path d="M2 6L17 1.500l.7 2.500L2.700 8.500z" fill="#fff" stroke="#222" /><path d="M5 5l1.500 2.500M9 4l1.500 2.500M13 2.700L14.500 5" stroke="#111" strokeWidth="1.800" /><path d="M2 9h18v11H2z" fill="#f3efe2" stroke="#222" /><text x="3" y="18" fontSize="9.500" fontWeight="700" fill="#c94422">3</text><text x="8.500" y="18" fontSize="9.500" fontWeight="700" fill="#2b66b8">2</text><text x="14" y="18" fontSize="9.500" fontWeight="700" fill="#2c9148">1</text></Ic> },
  { n: "File Explorer", run: true, icon: <Ic w={22} h={20}><path d="M1 1h7l2 2h11v14H1z" fill="#e9a823" /><path d="M1 5h20v12H1z" fill="#fcd462" /><path d="M5.500 18v-6.500c0-1 .5-1.500 1.500-1.500h8c1 0 1.500.5 1.500 1.500V18h-3v-4h-5v4z" fill="#3f91cb" /></Ic> },
  { n: "Store", icon: <Ic w={22} h={22}><path d="M7 5V1.500h8V5" stroke="#fff" strokeWidth="1.700" /><path d="M.5 5h21l-1 16h-19z" fill="#f6f6f6" /><path d="M7 8h3.500v3.500H7z" fill="#f04e23" /><path d="M11.500 8H15v3.500h-3.500z" fill="#7fb901" /><path d="M7 12.500h3.500V16H7z" fill="#04a3ee" /><path d="M11.500 12.500H15V16h-3.500z" fill="#fdb900" /></Ic> },
  { n: "Mail", icon: <Ic w={22} h={20}><path d="M0 7l11-7 11 7v5H0z" fill="#0c59a4" /><path d="M0 6.500h22V20H0z" fill="#3db4f0" /><path d="M0 20l11-7 11 7z" fill="#1b8fdc" /><path d="M2 6.500h18l-9 6.500z" fill="#f5fbff" /></Ic> },
  { n: "WhatsApp", icon: <span className="flex size-[20px] items-center justify-center rounded-full bg-[#35bf55] text-white"><FaWhatsapp size={19} /></span> },
  { n: "Telegram", icon: <span className="flex size-[20px] items-center justify-center rounded-full bg-[#2ca1dd] text-white"><FaTelegramPlane size={12} /></span> },
  { n: "Chrome", run: true, icon: <Ic w={23} h={21}><circle cx="10" cy="10" r="9.500" fill="#f9c623" /><path d="M10 10L1.600 5.500A9.500 9.500 0 0119 7H10z" fill="#e2463b" /><path d="M10 10l-2 9.300A9.500 9.500 0 011.700 5.500z" fill="#33a354" /><circle cx="10" cy="10" r="4.500" fill="#fff" /><circle cx="10" cy="10" r="3.600" fill="#3c7fe8" /><circle cx="15" cy="14" r="6.500" fill="#c2185b" /><text x="15" y="17.500" fontSize="9" fill="#fff" textAnchor="middle">h</text></Ic> },
  { n: "Psiphon", icon: <Ic w={22} h={22}><circle cx="11" cy="11" r="10.500" fill="#bd3a20" /><path d="M8 17.500L10 5M6 5.500h7c4 0 3.500 6-1 6.500H9" stroke="#fff" strokeWidth="2.500" /></Ic> },
  { n: "Rhino", run: true, icon: <Rhino /> },
  { n: "Rhino 7", run: true, icon: <Rhino n /> },
  { n: "Excel", run: true, on: true, icon: <ExcelBig s={19} /> },
];

function Taskbar() {
  return (
    <footer className="flex h-[36px] shrink-0 items-center bg-[linear-gradient(90deg,#1f1f1f_0%,#1f1f1f_26%,#484848_34%,#484848_70%,#424242_80%,#1c1c1c_88%,#1c1c1c_100%)] text-[10px] text-white">
      <div className="flex h-full w-[1026px] shrink-0">
        {apps.map((a) => (
          <button key={a.n} aria-label={a.n} className={`flex h-full flex-1 flex-col items-center ${a.on ? "bg-[#686868]" : ""}`}>
            <span className="flex flex-1 items-center pt-[2px]">{a.icon}</span>
            <span className={`h-[2px] ${a.run ? "bg-[#74dcc8]" : ""} ${a.on ? "w-full" : "w-[37px]"}`} />
          </button>
        ))}
      </div>
      <div className="ml-auto flex h-full items-center whitespace-nowrap">
        <Ic w={18} h={18}><defs><linearGradient id="sun" x1="0" y1="0" x2="1" y2="1"><stop stopColor="#ffd84d" /><stop offset="1" stopColor="#f69a1c" /></linearGradient></defs><circle cx="9" cy="9" r="8.700" fill="url(#sun)" /></Ic>
        <span className="ml-[9px] w-[40px] text-[12px]">35°C</span>
        <Ic w={12} h={7}><path d="M1 6l5-5 5 5" stroke="#fff" strokeWidth="1.200" /></Ic>
        <Ic w={15} h={12} className="ml-[8px]"><path d="M3.500 3.500h10v6h-10V6M1 1v2.500h3V1M2.500 3.500V6h3" stroke="#eee" /></Ic>
        <Ic w={15} h={14} className="ml-[6px]"><path d="M1 5h2.500L6.500 2v10L3.500 9H1z" stroke="#eee" /><path d="M8.500 5c1 1 1 3 0 4M10.500 3.500c2 2 2 5 0 7M12.500 2c2.500 3 2.500 7 0 10" stroke="#ddd" /></Ic>
        <Ic w={14} h={14} className="ml-[8px]"><path d="M1 12C2 6 6 2 12 1.500M4 12.500c0-4 3.500-8 8.500-8M7 13c0-3 2-5.500 6-5.500M10 13c0-1.500 1-3 3-3" stroke="#ccc" /></Ic>
        <span className="ml-[5px] flex w-[28px] flex-col items-center gap-[2px] leading-[14px]"><span className="font-['DejaVu_Sans',sans-serif]">فا</span><span>FA</span></span>
        <span className="ml-[5px] flex w-[52px] flex-col items-center gap-[2px] leading-[14px]"><span>2:43 PM</span><span>8/9/2021</span></span>
        <Ic w={24} h={24} className="ml-[14px]"><path d="M1 3h15v11H8l-3 3v-3H1z" fill="#fff" /><path d="M3 6h11M3 8.500h11M3 11h8" stroke="#333" /><circle cx="15.500" cy="16" r="7" fill="#333" stroke="#888" /><text x="15.500" y="19.700" fontSize="10" fill="#fff" textAnchor="middle">7</text></Ic>
        <span className="ml-[9px] h-full w-px bg-[#555]" /><span className="w-[4px]" />
      </div>
    </footer>
  );
}

export default function App() {
  return (
    <div className="flex h-screen flex-col overflow-hidden bg-white font-['Open_Sans','Noto_Sans',sans-serif] text-[10px] text-[#222]">
      <main className="relative flex min-h-0 flex-1 flex-col">
        <header className="flex h-[21px] shrink-0 items-center pl-[2px]">
          <Folder /><span className="mx-[5px] text-[#999]">|</span>
          <Ic w={12} h={14}><path d="M1 .5h10v13H1z" fill="#fff" stroke="#888" /><path d="M3 7l2.500 3L9.500 4" stroke="#d8451c" strokeWidth="1.500" /></Ic>
          <span className="ml-[7px]"><Folder /></span>
          <Ic w={5} h={6} className="ml-[9px]"><path d="M0 .5h5" stroke="#222" /><path d="M0 2.500h5L2.500 5.500z" fill="#222" /></Ic>
          <span className="mr-[3px] ml-[8px] text-[#999]">|</span>
          <span className="text-[#8a8a8a]">EnergyPlus</span>
          <div className="ml-auto flex items-center gap-[33px] pr-[19px]">
            <button aria-label="Minimize"><Ic w={9} h={9}><path d="M0 4.500h9" stroke="#888" /></Ic></button>
            <button aria-label="Restore"><Ic w={9} h={9}><path d="M.5 2.500h6v6h-6zM2.500 2.500v-2h6v6h-2" stroke="#888" /></Ic></button>
            <button aria-label="Close"><Ic w={9} h={9}><path d="M.5.500l8 8m0-8l-8 8" stroke="#888" /></Ic></button>
          </div>
        </header>
        <nav className="flex h-[20px] shrink-0 items-center text-[9px]">
          <button className="h-full w-[50px] bg-[#00a68c] text-[#123]">File</button>
          <button className="-mb-px h-[21px] w-[50px] border-x border-[#e3e5e8] bg-[#f5f6f7]">Home</button>
          <button className="w-[49px]">Share</button>
          <button className="w-[45px]">View</button>
          <span className="ml-auto flex items-center gap-[8px] pr-[2px]">
            <Ic w={8} h={5}><path d="M.5 4.500L4 1l3.500 3.500" stroke="#888" /></Ic>
            <button aria-label="Help" className="flex size-[14px] items-center justify-center rounded-full bg-[#0964b4] text-[10px] font-bold text-white">?</button>
          </span>
        </nav>
        <ExplorerRibbon />
        <div className="flex h-[36px] shrink-0 items-center pt-px pr-[9px]">
          <div className="flex w-[96px] items-center pl-[12px]">
            <Ic w={11} h={9}><path d="M11 4.500H1m3.500-4l-4 4 4 4" stroke="#555" strokeWidth="1.200" /></Ic>
            <Ic w={11} h={9} className="ml-[16px]"><path d="M0 4.500h10m-3.500-4l4 4-4 4" stroke="#ccc" strokeWidth="1.200" /></Ic>
            <Ic w={6} h={5} className="ml-[14px]"><path d="M.5 1L3 3.500 5.500 1" stroke="#666" strokeWidth="1.200" /></Ic>
            <Ic w={9} h={11} className="ml-[10px]"><path d="M4.500 11V1M.5 5l4-4 4 4" stroke="#555" strokeWidth="1.400" /></Ic>
          </div>
          <div className="flex h-[28px] flex-1 items-center border border-[#dadada] whitespace-nowrap">
            <span className="pl-[3px]"><Folder /></span>
            <Crumb /><a href="#pc">This PC</a><Crumb /><a href="#c">Local Disk (C:)</a><Crumb /><a href="#ladybug">ladybug</a><Crumb /><a href="#office">office01_002</a><Crumb /><a href="#ep">EnergyPlus</a>
            <button aria-label="Previous locations" className="ml-auto flex h-full w-[27px] items-center justify-center border-r border-[#dadada]"><Ic w={9} h={6}><path d="M1 1l3.500 3.500L8 1" stroke="#444" strokeWidth="1.300" /></Ic></button>
            <button aria-label="Refresh" className="flex h-full w-[27px] items-center justify-center"><Ic w={11} h={11}><path d="M3 1.800a4.500 4.500 0 105 0M3.200 5V1.500H0" stroke="#555" strokeWidth="1.200" /></Ic></button>
          </div>
          <label className="ml-[9px] flex h-[28px] w-[307px] items-center border border-[#dadada] pl-[12px]">
            <Ic w={12} h={12}><circle cx="7.500" cy="4.500" r="3.700" stroke="#777" /><path d="M5 7.500L.5 11.500" stroke="#777" /></Ic>
            <input aria-label="Search EnergyPlus" placeholder="Search EnergyPlus" className="ml-[11px] w-full bg-transparent placeholder:text-[#6d6d6d]" />
          </label>
        </div>
        <div className="flex min-h-0 flex-1">
          <nav className="flex w-[141px] shrink-0 flex-col overflow-hidden border-r border-[#f2f2f2] pt-[16px]">
            <div className="flex h-[475px] flex-col">
              {nav.map((n, i) =>
                n ? (
                  <a key={i} href="#folder" className={`flex flex-1 items-center whitespace-nowrap ${n.top ? "pl-[22px]" : "pl-[29px]"} ${n.sel ? "bg-[#d9d9d9]" : ""}`}>
                    <span className={`flex shrink-0 items-center ${n.top ? "w-[17px]" : "w-[18px]"}`}>
                      <span className={n.top ? "" : "flex w-[13px] justify-center"}>{n.icon}</span>
                    </span>
                    {n.t}
                    {n.pin && <span className="mr-[2px] ml-auto"><PushPin /></span>}
                  </a>
                ) : (
                  <span key={i} className="h-[7px] shrink-0" />
                ),
              )}
            </div>
          </nav>
          <section className="flex max-w-[640px] flex-1 flex-col">
            <div className="relative h-[31px] shrink-0 pt-[6px] pl-[18px] text-[#5b6472]">
              Name
              <span className="absolute top-[1px] left-[126px]"><Ic w={7} h={4}><path d="M.5 3.500l3-3 3 3" stroke="#777" /></Ic></span>
            </div>
            <ul className="flex h-[408px] flex-col pl-[16px]">
              {files.map(([t, icon], i) => (
                <li key={t} className={`flex flex-1 items-center pl-[3px] ${i === 4 ? "bg-[#d9d9d9]" : ""}`}>
                  <span className="flex w-[18px] items-center">{icon}</span>{t}
                </li>
              ))}
            </ul>
          </section>
        </div>
        <div className="flex h-[21px] shrink-0 items-center pl-[12px] text-[#33475c]">
          <span>21 items</span><span className="ml-[19px]">1 item selected</span><span className="ml-[7px]">7.39 MB</span>
          <span className="ml-auto flex items-center gap-[3px] pr-[7px]">
            <button aria-label="Details view" className="flex h-[21px] w-[20px] items-center justify-center border border-[#6cc3e2] bg-[#d3effa]"><Ic w={14} h={12}><path d="M1 1h3v2.500H1zM1 5h3v2.500H1zM1 9h3v2.500H1z" stroke="#8a6f7f" strokeWidth=".8" /><path d="M6 2.200h3m1 0h3M6 6.200h3m1 0h3M6 10.200h3m1 0h3" stroke="#5d7f93" /></Ic></button>
            <button aria-label="Large icons view" className="flex w-[14px] justify-center"><Pics /></button>
          </span>
        </div>
        <Excel />
        <svg className="pointer-events-none absolute top-[144px] left-[158px]" width="154" height="16" fill="none" aria-hidden="true"><path d="M3 5.500C30 6 50 8 85 8.500c25 .5 40 1 64.500 2" stroke="#0b45d8" strokeWidth="5.500" /></svg>
        <svg className="pointer-events-none absolute top-[280px] left-[160px]" width="132" height="16" fill="none" aria-hidden="true"><path d="M4 6.500C30 8 70 6 95 7c15 .8 22 2 32 4.500" stroke="#0b45d8" strokeWidth="5.500" /></svg>
        <svg className="pointer-events-none absolute top-[364px] left-[658px]" width="164" height="18" fill="none" aria-hidden="true"><path d="M4 10c12 2 28 2 40 2.500 10 2 40 2 54-.5 15-4 35-5 61-4.500" stroke="#0b45d8" strokeWidth="5.500" /></svg>
      </main>
      <Taskbar />
    </div>
  );
}
